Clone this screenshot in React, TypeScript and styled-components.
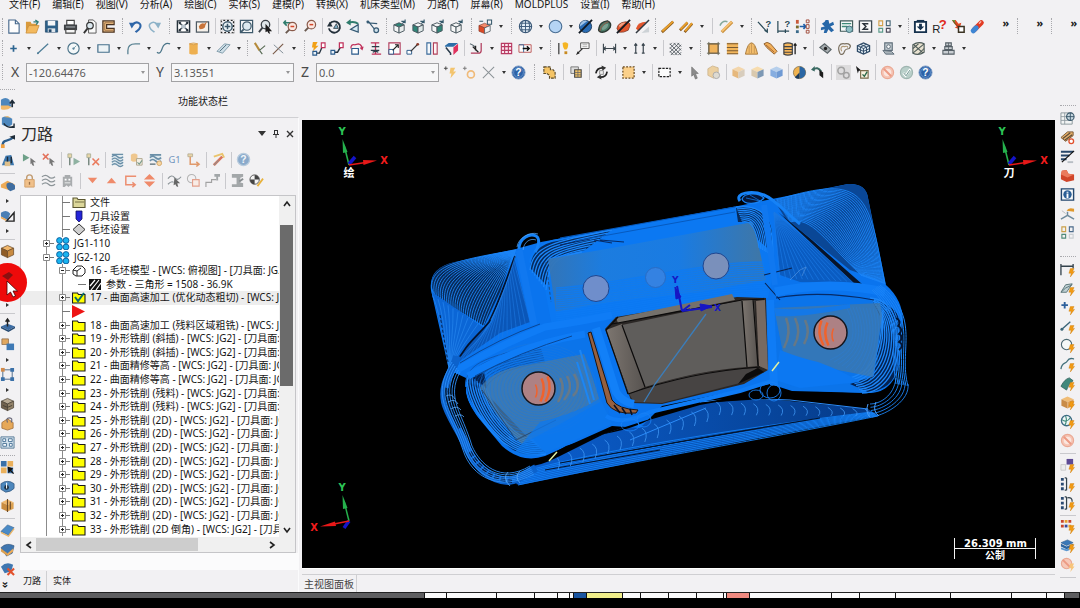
import React from 'react';
import styled, { createGlobalStyle } from 'styled-components';

const GlobalStyle = createGlobalStyle`
  *, *::before, *::after { box-sizing: border-box; }
  html, body { margin: 0; background: #000; overflow: hidden; }
  body, button, input {
    font-family: "Noto Sans", "Noto Sans CJK SC", sans-serif;
    color: #161616;
  }
  button { margin: 0; padding: 0; border: 0; background: none; }
  ul { margin: 0; padding: 0; list-style: none; }
`;

/* ---------- icon drawing helpers ---------- */

const L = (d: string, c: string, w = 1.2) => <path d={d} stroke={c} strokeWidth={w} fill="none" />;
const F = (d: string, c: string, s = 'none', w = 0.8) => <path d={d} fill={c} stroke={s} strokeWidth={w} />;
const O = (x: number, y: number, r: number, f: string, s = 'none', w = 1.2) => (
  <circle cx={x} cy={y} r={r} fill={f} stroke={s} strokeWidth={w} />
);
const cube = (t: string, l: string, r: string, s = 'none') => (
  <>
    {F('M8 1.5L14.5 4.5L8 7.5L1.5 4.5Z', t, s)}
    {F('M1.5 4.5L8 7.5V14.5L1.5 11.5Z', l, s)}
    {F('M14.5 4.5L8 7.5V14.5L14.5 11.5Z', r, s)}
  </>
);
const bolt = F('M11 7h4l-1.500 3h2l-4.500 6l1-4h-2.500z', '#f29a12', '#c97a08', 0.4);
const wire = (t: string, l: string, r: string) => (
  <>
    {F('M7.500 4L13 6.300L7.500 8.600L2 6.300Z', t, '#49565e', 1)}
    {F('M2 6.300L7.500 8.600V15L2 12.500Z', l, '#49565e', 1)}
    {F('M13 6.300L7.500 8.600V15L13 12.500Z', r, '#49565e', 1)}
    {L('M10 2.500h4M14 0.500v4M11 5l3-3', '#35586a', 1.2)}
  </>
);
const square4 = (a: string, b: string, c: string, d: string) => (
  <>
    {F('M2 2h4v5H2z', 'none', a, 1.2)}
    {F('M10 2h4v5h-4z', 'none', b, 1.2)}
    {F('M2 10h4v4H2z', 'none', c, 1.2)}
    {F('M10 10h4v4h-4z', 'none', d, 1.2)}
  </>
);
const lens = (x: number, y: number, c: string, f: string) => (
  <>
    {L(`M${x - 3} ${y + 3}L${x - 7} ${y + 7}`, '#6a5a50', 2)}
    {O(x, y, 4.5, f, c, 1.3)}
  </>
);
const q = (x: number, y: number, c: string, size = 11) => (
  <text x={x} y={y} fontSize={size} fontWeight={700} fill={c} textAnchor="middle" fontFamily="Liberation Sans, sans-serif">?</text>
);
const help = (
  <>
    {O(8, 8, 7, '#2c62a8', '#7f9dc4', 1)}
    {O(8, 8, 5.2, 'none', '#8fb0dd', 0.6)}
    {q(8, 12, '#fff')}
  </>
);

const ORG = '#efb35c';

const icons: Record<string, React.ReactNode> = {
  new: <>{F('M3 1h7l4 4v10H3z', '#fdfdfd', '#46688c', 1.2)}{L('M10 1v4h4', '#46688c')}</>,
  open: <>{F('M1 3h5l1 2h6v3H4l-3 6z', '#d99a3c')}{F('M4 7h11l-3 8H1z', '#f3b95e', '#c88b35')}{L('M9 3h4M11 1l3 2l-2 3', '#2f7c7a', 1.4)}</>,
  save: <>{F('M1.500 2h13v12h-13z', '#2c6089', '#23486a')}{F('M4 2h8v5H4z', '#f4f6f8')}{F('M4 10h8v4H4z', '#dfe6ec')}{F('M5 11h3v3H5z', '#23486a')}</>,
  print: <>{F('M4 1.500h8v5H4z', '#fff', '#444', 1.2)}{F('M1 6h14v6H1z', '#3f4246')}{F('M3 11h10v4H3z', '#f5f5f5', '#444', 1.2)}{L('M3 8.500h10', '#b9bec2', 1)}</>,
  preview: <>{F('M7 1h5l3 3v11H7z', '#fafafa', '#555', 1)}{L('M6 10L2 15', '#333', 2)}{O(8.500, 7, 3.500, '#dbe7ee', '#333', 1.3)}</>,
  cpart: <>{F('M2 2h12v4H6v4h8v4H2z', '#f0c48b', '#4a3220', 1.3)}{L('M4 4h9M4 4v8h9', '#8a5a30', 0.8)}</>,
  undo: <>{L('M5 6C9 1 15 5 13 9C12 12 9 13 8 14', '#2f66a8', 2.2)}{F('M1 4l7 0l-4 6z', '#2f66a8')}</>,
  redo: <>{L('M11 6C7 1 1 5 3 9C4 12 7 13 8 14', '#8db2c8', 1.6)}{F('M15 4l-7 0l4 6z', '#8db2c8')}</>,
  fit: <>{F('M1.500 2h13v12h-13z', '#fff', '#26323c', 1.5)}{L('M3 3.500l10 9M13 3.500l-10 9', '#26323c', 1.5)}{F('M5.500 6h5v4h-5z', '#b7c3cc')}{F('M3 3h3l-3 3zM13 3v3l-3-3zM3 13v-3l3 3zM13 13h-3l3-3z', '#26323c')}</>,
  regen: <>{F('M1.500 3h13v11h-13z', '#f6f1ea', '#4e5a64', 1.3)}{F('M4 8q3-5 6-3l3-3l-2 5q0 4-6 4z', '#c8743a')}</>,
  zoomdot: <>{F('M1.500 1.500h13v13h-13z', 'none', '#222', 1.5)}<path d="M1.500 1.500h13v13h-13z" stroke="#f1f0f2" strokeWidth={2} strokeDasharray="2 2" fill="none" />{O(8, 8, 5, '#e9f1f4', '#3a5568', 1.5)}{L('M8 5v6M5 8h6', '#3a5568', 1.6)}</>,
  zoomwin: <>{F('M1.500 1.500h13v13h-13z', '#f5f7f8', '#3f5a6c', 1.3)}{O(8.500, 7.500, 4.500, '#dce9f0', '#3f5a6c', 1.3)}{L('M5 11l-3 3', '#3f5a6c', 2)}</>,
  zoomsel: <>{O(8, 6, 4.500, '#dfe6ea', '#3b4248', 1.4)}{L('M5 9l-4 5', '#3b4248', 2)}{F('M8 5l7 8h-3l1 3l-2-1l-1-2l-2 1z', '#1b1b1b')}</>,
  unzoom: <>{L('M1 4h7M3 1.500L1 4l3 3', '#2f7c6d', 1.8)}{lens(10, 8, '#8a5a4a', '#fbe9e2')}{L('M8 8h4', '#d3472a', 1.6)}</>,
  unzoom2: <>{lens(10, 6, '#8a5a4a', '#fbe9e2')}{L('M8 6h4', '#d3472a', 1.6)}</>,
  rotate: <>{L('M3 5a6 6 0 1 1-1 5', '#24303a', 2)}{F('M0 8h6l-3-5z', '#24303a')}{F('M7 10l3-5l2 5z', '#7fb0c8', '#24303a')}</>,
  prevview: <>{L('M2 4q7-2 11 1', '#2f7c6d', 2)}{F('M0 4l5-4v7z', '#2f7c6d')}{F('M5 11l8-5v8z', '#d8ecf5', '#365a74', 1.3)}</>,
  view2: <>{L('M2 4l11 1M4 3l7 9', '#365a74', 1.3)}{O(12, 12, 2.500, '#cfe2ec', '#365a74', 1.3)}{O(3, 3, 1.500, '#365a74')}</>,
  cubeA: wire('#2f8577', '#f4f6f6', '#e8ecec'),
  cubeB: wire('#f4f6f6', '#2f8577', '#dfe8e8'),
  cubeC: wire('#f4f6f6', '#f4f6f6', '#2f8577'),
  cubeD: wire('#f7f8f8', '#f7f8f8', '#eef0f0'),
  cubeR: <>{F('M7 4.500L13 7L7 9.500L1 7Z', '#f58a6a', '#8a4a3a', 0.700)}{F('M1 7L7 9.500V15.500L1 13Z', '#dc4a26', '#8a3a2a', 0.700)}{F('M13 7L7 9.500V15.500L13 13Z', '#f3f3f3', '#49565e')}{L('M1.500 2.500h4M10 1h4.500v4.500H10z', '#35586a', 1.1)}</>,
  globe: <>{O(8, 8, 6.500, '#e4eef6', '#3a5877', 1.3)}{L('M8 1.500v13M1.500 8h13M4.500 3q-2 5 0 10M11.500 3q2 5 0 10M3 4.500h10M3 11.500h10', '#3a5877', 1)}</>,
  sphere: <>{O(8, 8, 6.700, '#b5d4f4', '#4b6f94', 1.2)}</>,
  halfblue: <>{O(8, 8, 6.500, '#2a6db5', '#1c3b5c', 1)}{F('M2 8a6 6 0 0 1 8-6z', '#9fc3e6')}{L('M1 15L15 1', '#101820', 2)}</>,
  greenell: <>{F('M2 10Q3 3 11 2Q16 4 14 9Q10 15 4 14Q1 13 2 10Z', '#4a7a68', '#2e3a34', 1.6)}{F('M5 10Q7 5 12 5Q12 10 6 12Z', '#7aa090')}{L('M3 13Q4 6 12 3', '#a05a48', 1)}</>,
  redhalf: <>{F('M1 10Q2 4 10 3Q15 3 15 7L13 12Q8 15 3 14Z', '#e2562e', '#6a2a1a', 0.700)}{L('M1 15L15 1', '#101820', 2)}{F('M3 7q3-4 7-3l-6 5z', '#f2a083')}</>,
  redhalf2: <>{F('M1 10Q3 3 12 3L4 13Z', '#e2562e')}{F('M7 15l8-7v6z', '#cdd2d6')}{L('M1 15L15 1', '#303840', 1.6)}</>,
  pencil: <>{L('M2 14L14 3', '#8a5a1c', 3)}{L('M2.500 13L14 2.500', '#e9a02c', 2)}</>,
  pencils: <>{L('M1 12L9 4M6 14L14 5', '#8a5a1c', 2.800)}{L('M1.500 11L9 3.500M6.500 13L14 4.500', '#e9a02c', 2)}</>,
  brush: <>{L('M1 7q3-6 8-4', '#84a89a', 1.6)}{L('M3 14L14 3', '#c88f3c', 3.400)}{L('M3 13L13.500 3', '#f5c070', 2.200)}</>,
  anapt: <>{L('M1 3l10 11M8 12l3 2v-4', '#2a4a58', 1.3)}{q(12, 8, '#2a4a58', 10)}</>,
  anadist: <>{L('M2 2v12M2 13h12M10 11v4M2 11v4', '#2a4a58', 1.3)}{q(12, 9, '#2a4a58', 10)}</>,
  replace: <>{F('M1 1h3v4H1z', '#c95a3a')}{F('M1 7h3v3H1z', '#7a6a2a')}{F('M1 12h3v3H1z', '#3a6a8a')}{L('M5 8h6M9 5.500l2.500 2.500l-2.500 2.500', '#1f5fa8', 1.8)}{F('M12 1h3v3h-3zM12 6h3v4h-3zM12 12h3v3h-3z', '#f1f1f1', '#a04a3a', 1)}</>,
  jig: <>{F('M6 1h3l1 4l4-2l1 3l-4 2l4 4l-3 2l-3-3l-2 4H4l1-4l-4 1V9l4-1L2 5l3-2z', '#2667a8')}</>,
  form: <>{F('M1.500 2h13v11h-13z', '#f5f8f8', '#3f5a58', 1.2)}{L('M3 5h10M3 8h6', '#3f8a78', 1.4)}{O(11, 11, 3.500, '#8fc0c4', '#3f6a78', 1)}</>,
  sigma: <>{F('M1.500 2h13v12h-13z', '#fafafa', '#3f4a52', 1.4)}{L('M11 5H5.500L8.500 8L5.500 11H11', '#2a323a', 1.5)}</>,
  four: square4('#d1a04a', '#4a6a7a', '#5a9a8a', '#4a4a5a'),
  boxdown: <>{F('M2 3h12v11H2z', '#fff', '#16324e', 2)}{F('M8 12L4 8h2.500V5h3v3H12z', '#16324e')}{F('M4 1h8v2H4z', '#16324e')}</>,
  rq: <><text x="4.500" y="15" fontSize="12" fill="#222" textAnchor="middle" fontFamily="Liberation Sans, sans-serif">R</text>{q(11.500, 11, '#e02a1a', 14)}</>,
  redarrow: <>{F('M1 1l4 0l3 4l3-1l-2 7l-5-2l2-1z', '#e04a22')}{F('M1 1l3 0l1 6z', '#5aa03c')}{L('M2 2l7 8', '#8a3a1a', 1)}{F('M8 8h6v6H8z', '#fdfdfd', '#3b3322', 1.6)}</>,
  pill: <g strokeLinecap="round">{L('M4.500 11.500L12 4', '#e23a22', 5.500)}{L('M3.500 12.500L6.500 9.500', '#3e86d4', 5.500)}{L('M10 4.500l1.500-1.500', '#f6b5ac', 1.4)}</g>,

  plus: L('M8 4.500v7M4.500 8h7', '#2c6490', 1.8),
  line: <>{L('M2 13L13 3', '#4c7c96', 1.3)}{O(2, 13, 1, '#4c7c96')}</>,
  circ: <>{O(8, 8, 6, '#f4f8f9', '#4a7288', 1.2)}{O(8, 8, 1.2, '#3b6c88')}{L('M8 8l3-3', '#7aa0b0', 1)}</>,
  rect: F('M2 4h12v8H2z', '#edf3f6', '#46708c', 1.3),
  fillet: L('M2 14V10Q2 3 10 3h5', '#5c8494', 1.4),
  spline: L('M1 12C5 15 6 9 7 7C9 2 12 2 15 3', '#4a7488', 1.3),
  cyl: <>{F('M3.500 3h9v10.500q-4.500 2-9 0z', '#eeb050')}{F('M3.500 3q4.500-2 9 0q-4.500 2-9 0z', '#f6cf8c', '#c88a35', 0.600)}</>,
  surf: <>{F('M1 11L9 3L15 4L7 13Z', '#cfdfe8', '#6a8a9a', 0.800)}{L('M4 11L11 4', '#4a6a7a', 1)}</>,
  trim: <>{L('M3 2l5 8', '#b58a3a', 2.200)}{L('M8 10l6-5M8 10l3 4', '#566a52', 1.2)}</>,
  brk: <>{L('M2 14L13 3', '#7a5a48', 1.2)}{L('M3 4l10 9', '#7d8a92', 1)}</>,
  modA: <>{F('M2 1h5l-2 4h3l-6 6l1-4H1z', '#f2a116')}{L('M5 13h4L12 6', '#243340', 1.4)}{F('M2 11h4v4H2z', '#e8f0f6', '#2a5a8a', 1.2)}{F('M11 2h4v5h-4z', '#fff', '#c0305a', 1.2)}</>,
  modB: <>{L('M4 12h4L12 5', '#243340', 1.6)}{F('M1 10h4v4H1z', '#e8f0f6', '#2a5a8a', 1.2)}{F('M10 2h4v5h-4z', '#fff', '#c0305a', 1.3)}</>,
  modC: <>{F('M3 8h7v6H3z', '#fff', '#2a5a8a', 1.2)}{L('M2 8q0-5 4-4l4-1q4 1 4 6M12 7l2 2l1-3', '#c0305a', 1.3)}</>,
  modD: <>{L('M2 9Q8 14 14 5M8 2v12', '#2c3e4a', 1.2)}{F('M8 2h5l-5 5z', '#fff', '#c0305a', 1)}</>,
  modE: <>{L('M3 2h9M4 14h10M8 2v12', '#c0305a', 1.4)}{L('M3 10h9M4 6h8M5 12q3-2 6 0', '#2c3e4a', 1.3)}</>,
  modF: <>{F('M2 2h12v12H2z', '#fdfdfd', '#b03a5a', 1.2)}{F('M2 9h5v5H2z', '#fff', '#2a5a8a', 1)}{L('M6 10L12 4M8.500 4H12v3.500', '#222', 1.2)}</>,
  modG: <>{F('M1 10h5v4H1z', '#fff', '#2a5a8a', 1)}{L('M5 11L12 4', '#333', 1.2)}{O(12.500, 3.500, 1.500, '#8a3a2a')}</>,
  modH: <>{F('M2 2h4v12H2z', '#f5f8fb', '#3a6a9a', 1.2)}{F('M9 2h4v12H9z', '#fdf4f6', '#b0405a', 1.2)}</>,
  modI: <>{F('M1 5l4-3h10l-5 4H1z', '#2d6ea8')}{F('M10 7l5-4v7l-5 5z', '#e0325e')}{L('M2 7l5 6v2', '#2a3a4a', 1.6)}</>,
  dyn: <>{L('M13 2v8q0 3-3 3H2', '#b03a5a', 1.3)}{L('M1 3q6 2 6 6', '#5a6a72', 1.2)}{L('M4 6l6 6M7 5v5', '#222', 1.4)}</>,
  gridpk: <>{F('M2 2h12v12H2z', '#fbe6ee')}{L('M2 2.500h12M2 6h12M2 10h12M2 13.500h12M2.500 2v12M6 2v12M10 2v12M13.500 2v12', '#b83a62', 1.200)}</>,
  stretch: <>{F('M1 4h13v8H1z', '#fdfdfd', '#b55', 1)}{L('M1 4h5v8', '#3a6a9a', 1)}{L('M5 8h7M9.500 5.500L12 8l-2.500 2.500', '#111', 1.5)}</>,
  note: <>{L('M3 2v12', '#444', 1.4)}{F('M7 2q4-2 6 1q0 5-2 6H9Q7 6 7 2z', '#f5b524')}{F('M9 11h3v3H9z', '#c88a20')}</>,
  leader: <>{F('M6 2h9v6H6z', '#f8f8f8', '#555', 1)}{L('M8 4h5M8 6h5', '#999', 0.8)}{L('M8 8L3 13', '#333', 1.2)}{F('M1 15l2-4l2 2z', '#222')}</>,
  dimh: L('M1.500 3v10M14.500 3v10M1.500 8h13M4 6l-2 2l2 2M12 6l2 2l-2 2', '#3d4850', 1.2),
  dimv: L('M4 3v10M12 3v10M2.500 5L4 3l1.500 2M10.500 5L12 3l1.500 2M2.500 13h3M10.500 13h3', '#3d4850', 1.3),
  hatch: <>{L('M2 4l2-2M2 8l6-6M2 12l10-10M3 15L14 4M7 15l7-7M11 15l3-3M2 11l4 4M2 7l8 8M2 3l12 12M6 2l8 8M10 2l4 4', '#4a5258', 0.900)}</>,
  frame: <>{F('M3 3h10v10H3z', ORG, '#8a6030', 1.2)}{L('M3 1v14M13 1v14M1 3h14M1 13h14', '#6a6a5a', 1)}</>,
  bars: <>{F('M2 2h12v12H2z', '#f2b65c')}{L('M2 3h12M2 7h12M2 10.500h12M2 13.500h12', '#7a5a30', 1.1)}</>,
  arch: <>{F('M1.500 14Q4 2 8 2Q12 2 14.500 14Z', '#f3bd6c', '#a87838', 1)}{L('M5.500 13V5M8 13V2M11 13V5', '#c09050', 0.800)}</>,
  rib: <>{F('M1 3Q4 0 8 3L15 11L12 14L4 7Z', '#f2b05a', '#8f6030', 1)}{L('M3 4l9 8', '#a06030', 1)}</>,
  stack: <>{F('M2 3q4-2 9 0v11q-5 2-9 0z', '#f5b55a', '#444', 1.3)}{L('M2 6h9M2 9h9M2 12h9', '#444', 1.1)}{L('M14 14V3M12.500 5L14 3l1.500 2', '#222', 1.4)}</>,
  nest: <>{F('M2 7l5-4l7 6l-4 4z', '#a7adb0', '#5a6468', 1.2)}{O(8, 8, 1.800, '#222')}</>,
  contour: <>{L('M3 13C0 6 3 2 8 3C13 2 16 5 13 8C10 9 9 8 8 11C7 15 4 15 3 13Z', '#7a7060', 1.3)}{L('M5 11C3 7 5 5 8 6C11 5 12 6 11 7', '#b09a78', 1.2)}</>,
  mesh: <>{F('M1.500 5L8 2l6.500 3v6L8 14L1.500 11z', '#dfeaf2', '#2e4a66', 1.3)}{L('M1.500 5L8 8l6.500-3M8 8v6M4.700 3.500l6.500 3v6M11.200 3.500l-6.500 3v6M1.500 8L8 11l6.500-3', '#2e4a66', 1)}</>,
  vise: <>{F('M4 2h8v8H4z', '#c3ccd2', '#5d6c78', 1.2)}{F('M2 10l9 1l3 3H5z', '#aab4ba', '#5d6c78', 1)}{O(8, 6, 2, '#f4f6f8', '#5d6c78', 1)}</>,
  meshB: <>{F('M2 4q6-4 12-1v9q-6 4-12 1z', '#e9e2d0', '#4c5a58', 1.2)}{L('M2 13L14 3M2 8l6-5M8 14l6-6M3 4l10 9', '#4c5a58', 1.1)}</>,
  mill: <>{F('M5 2h6v3H5zM4 6h8v3H4zM2 10h12v4H2z', '#c9ced2', '#555f66', 1.1)}{L('M8 2v12', '#555f66', 0.800)}</>,

  ptfast: <>{L('M1 3.500h4M3 1.500v4', '#444', 1)}{F('M8 3h5l-2 4h3l-6 7l1-5H7z', '#f3c46e')}</>,
  ptcirc: <>{L('M1 3.500h4M3 1.500v4', '#777', 1)}{O(9.500, 10, 3.700, 'none', '#f0bb7a', 1.800)}</>,
  cross: <>{L('M2 2l12 12M14 2L2 14', '#8b9296', 1.100)}</>,
  help,
  selA: <path d="M2 2h7v3h3l2 3v6H8v-3L5 9H2z" fill="#f5c465" stroke="#5a4a2a" strokeWidth={1.200} strokeDasharray="3 1" />,
  selB: <>{F('M2 2h8v7H2z', '#ddd', '#777', 1)}{F('M6 5h7v8H6z', '#f5c465', '#4a4a4a', 1.2)}{L('M6 8h7M6 10.500h7M9.500 5v8', '#666', 0.800)}</>,
  cycle: <>{L('M2 9q1-6 7-6M14 7q-1 6-7 6', '#222', 1.800)}{F('M8 0.500l5 2.500l-4 3zM8 15.500l-5-2.500l4-3z', '#333')}{F('M6 6h4v4H6z', '#eee', '#777', 0.800)}</>,
  selwin: <>{F('M2 2h12v12H2z', '#fbd08a')}<path d="M2 2h12v12H2z" fill="none" stroke="#6a4a20" strokeWidth={1.300} strokeDasharray="2 1.500" /></>,
  dashrect: <path d="M2 3.500h12v9H2z" fill="#fbfbfb" stroke="#222" strokeWidth={1.300} strokeDasharray="2.500 1.200" />,
  arrow: F('M5 2l7 7h-3l2 5l-2 1l-2-5l-2 2z', '#8b8b8b', '#666', 0.600),
  boxes: <>{F('M2 4l5-3l6 2v7l-5 4l-6-3z', '#ecd0a0', '#c9b088', 0.800)}{O(11, 11, 3.500, '#dedbd2', '#aaa', 1)}</>,
  boxA: cube('#f3d6ac', '#e6b87c', '#d8cdbd'),
  boxB: cube('#f7dcae', '#d9c9ae', '#7d98b4'),
  boxC: cube('#b6cfec', '#86ade0', '#6f9ad4'),
  ball: <>{O(8, 8, 6.500, '#f0b24e', '#7a6a4a', 0.800)}{F('M8 8V1.500A6.500 6.500 0 0 1 8 14.500Z', '#2a66a4')}{F('M8 8L3 13q2 2 5 1.500z', '#1c3a5a')}</>,
  turn: <>{L('M2 5q5-4 9 2', '#3a6a62', 2)}{F('M0 5l4-4v6z', '#3a6a62')}{F('M9 5l4 3v6l-4-3z', '#1c1c1c')}</>,
  gears: <>{F('M0 0h16v16H0z', '#dddcdd')}{O(5.500, 6, 3.500, 'none', '#a2a2a2', 1.600)}{O(11, 11, 3, 'none', '#a2a2a2', 1.600)}</>,
  selchk: <>{F('M1 1l6 5l-3 0l-1 3z', '#1c1c1c')}{F('M6 6h8v8H6z', '#fbf3e0', '#7a6a4a', 1.200)}{L('M8 10l2 2l3-5', '#2f6a4a', 1.500)}</>,
  no: <>{O(8, 8, 6.500, '#f6c4b4', '#eaa893', 1.2)}{O(8, 8, 4, '#fbe6de')}{L('M4 4l8 8', '#ec9a84', 2)}</>,
  ok: <>{O(8, 8, 6.500, '#b9cfc9', '#9fb5b0', 1.2)}{L('M4.500 8.500l2.500 3l5-7', '#fff', 2.4)}{L('M5 8.500l2.500 3l4-6', '#54807a', 0.900)}</>,

  tpsel: <>{F('M1 2l7 4l-7 4z', '#6ea088')}{F('M9 6l6 5h-3l1 4l-2-1l-1-2l-1 1z', '#777')}</>,
  tpdel: <>{L('M2 2l6 6M8 2L2 8', '#e2725c', 1.600)}{F('M9 6l6 5h-3l1 4l-2-1l-1-2l-1 1z', '#777')}</>,
  tpplay: <>{F('M2 2h4v4H2z', '#e8d6a8', '#a0a890', 0.800)}{L('M4 6v8', '#7a8a82', 1.600)}{F('M8 6l7 4l-7 4z', '#8fb2a2')}</>,
  tpx: <>{F('M2 2h4v4H2z', '#e8d6a8', '#a0a890', 0.800)}{L('M4 6v8', '#7a8a82', 1.600)}{L('M8 7l7 7M15 7l-7 7', '#ea7b5e', 1.600)}</>,
  waves: <>{F('M2 2h12v12H2z', '#dfe9ee')}{L('M2 2.500h12M2 5q3-3 6 0t6 0M2 8q3-3 6 0t6 0M2 11q3-3 6 0t6 0M2 14q3-3 6 0t6 0', '#6a8fa8', 1.500)}</>,
  verify: <>{F('M2 3q4-3 7 0v6q-4 3-7 0z', '#efc78e')}{F('M8 7h6v7H8z', '#f4efe4', '#b0a890', 1)}{L('M9 11l2 2l3-4', '#7a9a8a', 1.200)}</>,
  waves2: <>{F('M2 2h12v7H2z', '#dfe9ee')}{L('M2 3h12M2 6q3-3 6 0t6 0M2 9.500q3-3 6 0t6 0', '#6a8fa8', 1.800)}{L('M2 13h6', '#7a8a92', 1.800)}{O(12, 12, 2.500, '#f6d6a4', '#d8a868', 1)}</>,
  g1: <text x="8" y="12" fontSize="10" fill="#6f93bd" textAnchor="middle">G1</text>,
  feed: <>{F('M2 2h5v3H2z', '#e8d6a8', '#b0a890', 0.800)}{L('M4.500 5v8h9M11 10.500l3 2.500l-3 2.500', '#e09a6c', 1.600)}</>,
  wand: <>{L('M3 14L12 5', '#d9745a', 2.800)}{L('M3 5l9-3l2 4', '#eac46c', 2)}{L('M3 14L8 9', '#8f8f8f', 1.200)}</>,
  helpp: <>{O(8, 8, 6.500, '#8aaacb', '#b8cbdd', 1.4)}{q(8, 12, '#f2f6fa')}</>,
  lock: <>{L('M5 7V5a3 3 0 0 1 6 0v2', '#c09a70', 1.500)}{F('M3 7h10v8H3z', '#f0c08a', '#d2a06a', 1)}{L('M8 9.500v3', '#9a7048', 1.400)}</>,
  curves: L('M1 4q4-3 7 0t7 0M1 8q4-3 7 0t7 0M1 12q4-3 7 0t7 0', '#8b9397', 1.300),
  ghost: <>{F('M3 15V4h2V2h6v2h2v11l-2-2l-2 2l-2-2l-2 2z', '#a9acae')}{F('M5 6h2v2H5zM9 6h2v2H9zM5 10h6v1H5z', '#fff')}</>,
  triD: F('M3 5h10l-5 6z', '#ef8a6a'),
  triU: F('M3 11h10l-5-6z', '#ef8a6a'),
  insert: L('M14 3.500H3v9h9M10 10l3 2.500l-3 2.500', '#ec8e70', 1.600),
  updown: <>{F('M2 7h12L8 1zM2 9h12l-6 6z', '#ef8a6a')}</>,
  wsel: <>{L('M1 6q4-5 7-1t7-1M1 12q4-4 6-2', '#8a9296', 1.200)}{F('M8 5l6 6h-3l1 4l-2-1l-1-2l-2 1z', '#666')}</>,
  shapes: <>{O(6, 6, 4.500, 'none', '#b4b4b4', 1.100)}{F('M7 7h7v7H7z', '#f8ece6', '#e3a08c', 1.200)}</>,
  steps: <>{L('M1 15V10h6V7h5', '#a2a2a2', 1.200)}{F('M10 1h6v3h-2v4h-2V4h-2z', '#a2a6a8')}</>,
  machine: <>{F('M2 1h12v3l-3 1v5l3 1v4H2v-3h5V5H2z', '#a3a7a9')}{L('M10 9l4-3', '#8a8f92', 2)}</>,
  ballpen: <>{O(6, 7, 5, '#f4f4f4', '#555', 1)}{F('M6 7V2a5 5 0 0 1 5 5zM6 7v5a5 5 0 0 1-5-5z', '#444')}{L('M9 14L15 6', '#e8b23c', 1.800)}</>,

  lA: <>{F('M1 4q5-4 9 0l2 7q-6 4-11 1z', '#4d87bd')}{F('M1 10h8l3 2q-5 4-11 2z', '#f1b868')}{L('M13 12V6M10.500 8L13 5l2.500 3', '#1d2b38', 1.800)}</>,
  lB: <>{F('M2 3q5-3 11 1v6q-5 4-11 0z', '#4d87bd')}{F('M4 2l4-1l4 2z', '#f1b868')}{L('M4 9q4 6 11 3M15 9v4h-4', '#1d2b38', 1.500)}</>,
  lC: <>{L('M3 13q-1-5 4-6t8-4', '#2c5d8c', 2.400)}{F('M1 11h4v4H1z', '#f1a040')}{F('M10 3l6-2v5z', '#1d2b38')}</>,
  lD: <>{F('M2 13L6 3l6-1l3 11z', '#3b77ae')}{F('M5 9h6v5H5z', '#dfc08c')}{L('M8 9V4M12 11V4', '#1d2b38', 1.500)}</>,
  lE: <>{F('M1 7l7-4l8 4l-6 6l-9-3z', '#edab58')}{F('M7 6q5-3 9 2v4l-5 2q-5-3-4-8z', '#3f6da0')}</>,
  lF: <>{F('M1 5q6-4 10 1l-3 7L1 9z', '#4a7fb5')}{F('M1 9l6 3v2L1 11z', '#edab58')}{L('M7 14L15 5v9z', '#222', 1.500)}</>,
  lG: cube('#f0b66a', '#8f5c26', '#c88a40', '#6a4a28'),
  lH: cube('#c05030', '#9a2a1a', '#b03a22'),
  lI: <>{F('M1 9l7-3l8 3l-7 4z', '#3d6da4')}{L('M8 9V2M6 4l2-3l2 3', '#222', 1.500)}{F('M1 9l8 4v2l-8-4zM16 9l-7 4v2l7-4z', '#284c74')}</>,
  lJ: <>{F('M2 2h7v6H2z', '#e0a860', '#8a6a4a', 0.800)}{F('M7 7h8v7H7z', '#3f7ab5')}</>,
  lK: <>{L('M3 3h10M3 13h10M3 3v10M13 3v10', '#4c6a8a', 1)}{F('M1 1h4v4H1z', '#d08a4a')}{F('M11 1h4v4h-4zM1 11h4v4H1zM11 11h4v4h-4z', '#3a70a8')}</>,
  lL: <>{cube('#b8aa94', '#71624e', '#93836a', '#4a4236')}{L('M3 9l5 2l5-2', '#4a4236', 1)}</>,
  lM: <>{F('M2 7l6-4l6 4v6l-6 2l-6-2z', '#e6a858', '#9a6a38', 0.800)}{L('M8 7q-2-5 2-5t2 5', '#667', 1.200)}</>,
  lN: <>{F('M1 2h14v12H1z', '#d5e4ee', '#5a7c96', 1)}{F('M3 9h4v3H3zM9 4h4v3H9zM3 4h3v3H3zM10 9h3v3h-3z', '#f6fafc', '#4a7296', 1)}</>,
  lO: <>{F('M1 1h6v6H1zM8 8h6v6H8z', '#3a70a8')}{F('M8 1h6v6H8zM1 8h6v6H1z', '#eab05c')}{F('M8 7l6 2l-2 2l3 3l-1 1l-3-3l-2 2z', '#111')}</>,
  lP: <>{F('M1 5q7-5 14 0v5q-4 4-9 4l-5-3z', '#4d87bd', '#355a80', 0.800)}{O(7, 9, 2.500, '#1c2c3c')}{L('M7 4v6', '#f0f4f8', 1.200)}</>,
  lQ: <>{cube('#efb76c', '#c98c40', '#dba050')}{L('M8 1v14M11 4v8', '#6a4a28', 1.200)}</>,
  lR: <>{F('M1 9l7-7l7 3l-6 8z', '#4a8ac6', '#2c5a88', 0.600)}{L('M1 10l8 4l6-8', '#e8b468', 1.500)}</>,
  lS: <>{F('M1 6q6-6 14-2l-2 8l-6 3z', '#3f76b0', '#284a70', 0.600)}{F('M7 13l7-6v3l-6 5z', '#edab58')}{F('M1 7l7 5v3l-7-5z', '#dca050')}</>,
  lT: <>{F('M1 6q6-6 13-2l-2 7l-7 2z', '#3f76b0')}{L('M8 8l7 7M15 8l-7 7', '#e2502c', 2.200)}</>,

  rA: <>{F('M1 2h12v12H1z', '#f2f4f4', '#8b979c', 1)}{L('M1 6h12M1 10h12M5 2v12', '#8b979c', 0.900)}{O(11, 6, 4, '#c7d8e0', '#3c5a6c', 1.200)}{L('M11 2v8M7 6h8', '#3c5a6c', 1)}</>,
  rB: <>{F('M1 8L8 2h6v4L6 12z', '#e6b06a', '#7a5630', 1)}{L('M3 9l8-6M5 11l8-6', '#5a4a3a', 1.200)}{O(12, 12, 2.500, '#fff', '#e0502c', 1.400)}</>,
  rC: <>{L('M1 3h13M1 7h9M1 11h6', '#26466a', 2.200)}{L('M2 14L15 2', '#111', 1.300)}{L('M8 14h6', '#b8bec4', 2)}</>,
  rD: <>{F('M1 7l1-4l5-1l2 4l6 1v6l-8 2l-6-3z', '#d0452a')}{F('M1 7l7 3l7-3l-6-1l-2-4l-5 1z', '#ea7a5c')}</>,
  rE: <>{F('M1.500 2h13v12h-13z', '#f8fafb', '#22466e', 1.500)}{O(8, 8, 4.500, '#2b5f96')}{F('M7 7h2v5H7zM7 5h2v1H7z', '#fff')}</>,
  rF: <>{L('M1 14l7-4l7 4M8 10V6', '#6f8a9c', 1.600)}{L('M2 5l4 3', '#bbb', 1)}{F('M7 5q2-4 8-2v3z', '#e0982c')}</>,
  rG: square4('#c9a04a', '#4a6a8a', '#4f8a7a', '#c9ced2'),
  rH: <>{L('M1 2v12M1 4.500h13M14 2v5', '#33424c', 1.400)}{bolt}</>,
  rI: <>{F('M1 12L6 4l7-1l-6 9z', '#c0d0d4', '#5a7478', 1)}{L('M1 12q4-5 12-8', '#5a7478', 1)}{bolt}</>,
  rJ: <>{L('M5 2v7M1.500 5.500h7', '#2c5f9c', 2)}{bolt}</>,
  rK: <>{L('M2 11L11 3', '#3a6478', 1.500)}{O(2, 11, 1.600, '#3a6478')}{bolt}</>,
  rL: <>{O(7, 7, 5.500, '#f5f9f9', '#4d6a74', 1.200)}{bolt}</>,
  rM: <>{L('M1 13C2 5 6 8 8 4S13 2 15 2', '#43707c', 1.400)}{bolt}</>,
  rN: <>{F('M1 11q4-8 9-9l4 3q-5 3-7 10z', '#3f887c', '#2a5a54', 0.800)}{bolt}</>,
  rO: <>{cube('#f1bd76', '#c98c48', '#e0a25a')}{bolt}</>,
  rP: <>{O(7, 7, 5.500, '#edf5f5', '#3d6a84', 1.400)}{L('M2 6q5 4 9-2M6 2q2 6-1 10', '#3d8a7a', 1.200)}{bolt}</>,
  rQ: <>{F('M7 1h7v6H7z', '#5d4a94')}{F('M1 7h5v6H1z', '#ececec', '#c2c2c2', 0.800)}{bolt}</>,
  rR: <>{F('M1 1h3v3H1zM1 6h3v3H1zM1 11h3v3H1z', '#2a4a72')}{L('M7 1v13M5 1h2M5 14h2', '#33424c', 1.300)}{bolt}</>,
  rS: <>{F('M1 1h3v3H1zM1 6h3v3H1zM1 11h3v3H1z', '#2a4a72')}{L('M7 1v13M5 1h2M5 14h2M8 2q5-1 5 4', '#33424c', 1.300)}{bolt}</>,
  rT: <>{F('M1 1h3v3H1zM9 1h3v3H9zM1 6h3v3H1z', '#c8452c')}{F('M5 1h3v3H5zM9 6h3v3H9z', '#e8a02c')}{F('M5 6h3v3H5z', '#3a4a9a')}{bolt}</>,
  rU: <>{F('M1 5l7-3l6 3l-7 3z', '#3a78b8', '#2a5a8a', 0.600)}{F('M1 9l6 3l7-3v-3l-7 3l-6-3z', '#2d66a2')}{F('M1 12l6 2l3-1v-2l-3 1l-6-2z', '#5c98d0')}{bolt}</>,
  rV: <>{O(7, 7, 5.500, '#f6c8b8', '#eaa893', 1.2)}{L('M3 3l8 8', '#ec9a84', 2)}{F('M11 7h4l-1.500 3h2l-4.500 6l1-4h-2.500z', '#f8c47a')}</>,
};

/* ---------- shell ---------- */

const Shell = styled.div`
  display: flex;
  flex-direction: column;
  height: 100vh;
  min-height: 600px;
  overflow: hidden;
  background: #f2f1f3;
`;

const MenuBar = styled.nav`
  display: flex;
  gap: 12px;
  height: 15px;
  padding-left: 9px;
`;

const MenuItem = styled.button`
  height: 9px;
  font-size: 10px;
  line-height: 9px;
  white-space: nowrap;
`;

const Bar = styled.div<{ $h?: number }>`
  display: flex;
  align-items: center;
  flex: none;
  height: ${p => p.$h ?? 22}px;
`;

const Strip = styled.aside<{ $w: number; $end?: number }>`
  display: flex;
  flex-direction: column;
  align-items: center;
  flex: none;
  width: ${p => p.$w}px;
  padding-right: ${p => p.$end ?? 0}px;
  overflow: hidden;
`;

const IconButton = styled.button`
  display: grid;
  place-items: center;
  flex: none;
  width: 19px;
  height: 19px;
  svg { display: block; width: 15px; height: 15px; overflow: visible; }
`;

const Caret = styled.button<{ $column?: boolean; $soft?: boolean }>`
  display: grid;
  place-items: center;
  flex: none;
  width: 11px;
  height: 11px;
  opacity: ${p => (p.$soft ? 0.5 : 1)};
  &::after {
    content: '';
    border: 2px solid transparent;
    ${p => (p.$column ? 'border-left: 3px solid #333; border-right: 0;' : 'border-top: 3px solid #333; border-bottom: 0;')}
  }
`;

const Divider = styled.span<{ $size: number; $dotted?: boolean; $column?: boolean }>`
  display: grid;
  place-items: center;
  flex: none;
  width: ${p => (p.$column ? 16 : p.$size)}px;
  height: ${p => (p.$column ? p.$size : 16)}px;
  &::after {
    content: '';
    width: ${p => (p.$column ? '100%' : '0')};
    height: ${p => (p.$column ? '0' : '100%')};
    ${p => (p.$column ? 'border-top' : 'border-left')}: 1px ${p => (p.$dotted ? 'dotted #a9a9ad' : 'solid #c9c9cd')};
  }
`;

const Gap = styled.span<{ $size: number }>`
  flex: none;
  width: ${p => p.$size}px;
  height: ${p => p.$size}px;
`;

const More = styled.button<{ $down?: boolean }>`
  flex: none;
  align-self: ${p => (p.$down ? 'center' : 'flex-start')};
  width: 14px;
  height: 14px;
  font-size: 11px;
  line-height: 9px;
  font-weight: 700;
  text-align: center;
  transform: ${p => (p.$down ? 'rotate(90deg)' : 'none')};
`;

/* Item codes: "|n" line, ":n" dotted handle, "_n" gap, "v" drop-down caret, ">>" overflow, otherwise an icon. */
function Items({ list, column }: { list: string; column?: boolean }) {
  return (
    <>
      {list.split(' ').map((code, i) => {
        const n = Number(code.slice(1));
        if (code[0] === '|' || code[0] === ':')
          return <Divider key={i} $size={n} $dotted={code[0] === ':'} $column={column} />;
        if (code[0] === '_') return <Gap key={i} $size={n} />;
        if (code === 'v') return <Caret key={i} $column={column} aria-label="more options" />;
        if (code === '>>') return <More key={i} $down={column} aria-label="more tools">»</More>;
        return (
          <IconButton key={i} aria-label={code}>
            <svg viewBox="0 0 16 16">{icons[code]}</svg>
          </IconButton>
        );
      })}
    </>
  );
}

const AxisLabel = styled.label`
  flex: none;
  width: 22px;
  font-size: 14px;
  line-height: 20px;
  text-align: center;
  color: #4a4a4a;
`;

const Combo = styled.div`
  display: flex;
  align-items: center;
  flex: none;
  width: 123px;
  height: 19px;
  background: #f7f7f8;
  border: 1px solid #a2a2a4;
`;

const ComboInput = styled.input`
  flex: 1;
  min-width: 0;
  padding: 0 2px;
  border: 0;
  background: transparent;
  font-size: 11px;
  line-height: 17px;
  color: #5c5c5c;
`;

const Main = styled.div`
  display: flex;
  flex: 1;
  min-height: 0;
  position: relative;
`;

const Centre = styled.div`
  display: flex;
  flex-direction: column;
  flex: 1;
  min-width: 0;
`;

const FunctionBar = styled.div`
  flex: none;
  height: 32px;
  padding-left: 158px;
  font-size: 10px;
  line-height: 32px;
`;

const Work = styled.div`
  display: flex;
  flex: 1;
  min-height: 0;
  gap: 3px;
`;

/* ---------- tool path panel ---------- */

const Panel = styled.section`
  display: flex;
  flex-direction: column;
  flex: none;
  width: 279px;
  border-top: 1px solid #d0d0d3;
  border-right: 1px solid #fbfbfc;
`;

const PanelHead = styled.header`
  display: flex;
  align-items: center;
  height: 31px;
  padding: 0 1px;
`;

const PanelTitle = styled.h1`
  flex: 1;
  margin: 0;
  font-size: 16px;
  line-height: 30px;
  font-weight: 400;
  color: #2b2b2b;
`;

const HeadButton = styled.button`
  display: grid;
  place-items: center;
  width: 14px;
  height: 14px;
`;

const TreeBox = styled.div`
  display: grid;
  grid-template-columns: 1fr 16px;
  grid-template-rows: 1fr 15px;
  flex: 1;
  min-height: 0;
  margin: 4px 2px 0 0;
  background: #fff;
  border: 1px solid #c5c5c8;
`;

const Tree = styled.ul`
  display: grid;
  grid-auto-rows: 1fr;
  min-width: 0;
  padding-bottom: 1px;
  overflow: hidden;
  font-size: 10px;
  line-height: 13px;
`;

const Row = styled.li<{ $depth: number; $active?: boolean }>`
  display: flex;
  align-items: center;
  gap: 2px;
  min-height: 0;
  padding-left: ${p => 21 + p.$depth * 16}px;
  white-space: nowrap;
  background:
    linear-gradient(#8b8b8b, #8b8b8b) 25px 0 / 1px 100% no-repeat,
    ${p => (p.$depth > 0 ? 'linear-gradient(#8b8b8b, #8b8b8b) 41px 0 / 1px 100% no-repeat,' : '')}
    ${p => (p.$active ? '#ededed' : '#fff')};
`;

const Twist = styled.span`
  flex: none;
  width: 12px;
  height: 9px;
  svg { display: block; }
`;

const RowIcon = styled.span`
  flex: none;
  width: 14px;
  height: 13px;
  svg { display: block; }
`;

const RowText = styled.span`
  padding-left: 2px;
`;

const ScrollV = styled.div`
  display: flex;
  flex-direction: column;
  align-items: center;
  background: #f0f0f0;
`;

const ScrollH = styled.div`
  display: flex;
  align-items: center;
  grid-column: 1 / -1;
  padding-right: 16px;
  background: #f0f0f0;
`;

const ScrollArrow = styled.button`
  display: grid;
  place-items: center;
  flex: none;
  width: 15px;
  height: 15px;
`;

const TrackV = styled.div`
  flex: 1;
  align-self: stretch;
  display: flex;
  flex-direction: column;
  padding: 0 2px 0 1px;
  &::before { content: ''; flex: 14; }
  &::after { content: ''; flex: 136; }
`;

const ThumbV = styled.div`
  flex: 160;
  background: #6b6b6b;
`;

const TrackH = styled.div`
  flex: 1;
  height: 13px;
`;

const ThumbH = styled.div`
  width: 71%;
  height: 100%;
  background: #cdcdcd;
`;

const PanelFoot = styled.div`
  flex: none;
  height: 17px;
  background: #fbfbfc;
`;

const Tabs = styled.div`
  display: flex;
  align-items: center;
  flex: none;
  height: 22px;
`;

const Tab = styled.button`
  height: 20px;
  padding: 0 5px 0 3px;
  font-size: 9px;
  line-height: 20px;
  border-right: 1px solid #cfcfd2;
  &:last-child { padding-left: 6px; border-right: 0; }
`;

type Kind = 'dir' | 'tool' | 'stock' | 'group' | 'model' | 'param' | 'done' | 'ptr' | 'op';

const rows: [number, string, Kind, string][] = [
  [1, '', 'dir', '文件'],
  [1, '', 'tool', '刀具设置'],
  [1, '', 'stock', '毛坯设置'],
  [0, '+', 'group', 'JG1-110'],
  [0, '-', 'group', 'JG2-120'],
  [1, '-', 'model', '16 - 毛坯模型 - [WCS: 俯视图] - [刀具面: JG2]'],
  [2, '', 'param', '参数 - 三角形 =  1508 - 36.9K'],
  [1, '+', 'done', '17 - 曲面高速加工 (优化动态粗切) - [WCS: JG2]'],
  [1, '', 'ptr', ''],
  [1, '+', 'op', '18 - 曲面高速加工 (残料区域粗铣) - [WCS: JG2]'],
  [1, '+', 'op', '19 - 外形铣削 (斜插) - [WCS: JG2] - [刀具面: JG2]'],
  [1, '+', 'op', '20 - 外形铣削 (斜插) - [WCS: JG2] - [刀具面: JG2]'],
  [1, '+', 'op', '21 - 曲面精修等高 - [WCS: JG2] - [刀具面: JG2]'],
  [1, '+', 'op', '22 - 曲面精修等高 - [WCS: JG2] - [刀具面: JG2]'],
  [1, '+', 'op', '23 - 外形铣削 (残料) - [WCS: JG2] - [刀具面: JG2]'],
  [1, '+', 'op', '24 - 外形铣削 (残料) - [WCS: JG2] - [刀具面: JG2]'],
  ...Array.from({ length: 8 }, (_, i): [number, string, Kind, string] => [
    1, '+', 'op', `${25 + i} - 外形铣削 (2D) - [WCS: JG2] - [刀具面: JG2]`,
  ]),
  [1, '+', 'op', '33 - 外形铣削 (2D 倒角) - [WCS: JG2] - [刀具面: JG2]'],
];

const folder = F('M0.500 2h5l1 1.500h6.500v8.500H0.500z', '#ffff00', '#1a1a1a', 1.1);
const rowIcons: Record<Kind, React.ReactNode> = {
  dir: <>{F('M1 2h4l1 1.500h7v8H1z', '#dcd79a', '#5a5630', 1.1)}{L('M3 6h9', '#5a5630', 0.800)}</>,
  tool: F('M4 1h6v8l-3 3l-3-3z', '#2424d8', '#101060', 0.800),
  stock: F('M7 1l6 5.500l-6 5.500l-6-5.500z', '#cfcfcf', '#333', 1),
  group: <>{[3.5, 10].map(x => [3.5, 10].map(y => <circle key={`${x}${y}`} cx={x} cy={y} r={2.900} fill="#18b4f0" stroke="#0a5a9a" strokeWidth={0.900} />))}</>,
  model: <>{F('M1 6l4-4h5l3 3v4l-3 3H4l-3-2z', '#fff', '#222', 1)}{L('M1 6l4 1l4-3M5 7v5', '#222', 1)}</>,
  param: <>{F('M1 1h12v11H1z', '#111')}{L('M2 8l5-6M3 12l8-10M8 12l5-7', '#fff', 1.2)}</>,
  done: <>{folder}{L('M3 6l3 4l6-8', '#0a6a6a', 2)}</>,
  ptr: F('M0 0l13 6.500l-13 6.500z', '#ee1414'),
  op: folder,
};

function ToolpathTree() {
  return (
    <Tree role="tree">
      {rows.map(([depth, twist, kind, text], i) => (
        <Row key={i} role="treeitem" $depth={depth} $active={kind === 'done'}>
          <Twist>
            <svg width="12" height="9" viewBox="0 0 12 9">
              <path d={twist ? 'M8 4.500h4' : 'M4 4.500h8'} stroke="#777" />
              {twist && <path d="M1.500 1.500h6v6h-6z" fill="#fff" stroke="#8a8a8a" />}
              {twist && <path d={twist === '+' ? 'M3 4.500h3M4.500 3v3' : 'M3 4.500h3'} stroke="#222" />}
            </svg>
          </Twist>
          <RowIcon><svg width="14" height="13" viewBox="0 0 14 13">{rowIcons[kind]}</svg></RowIcon>
          <RowText>{text}</RowText>
        </Row>
      ))}
    </Tree>
  );
}

const Chevron = ({ d }: { d: string }) => (
  <svg width="8" height="8" viewBox="0 0 8 8"><path d={d} fill="none" stroke="#222" strokeWidth="1.600" /></svg>
);

/* ---------- graphics view ---------- */

const ViewColumn = styled.section`
  display: flex;
  flex-direction: column;
  flex: 1;
  min-width: 0;
  padding-top: 3px;
`;

const Canvas = styled.div`
  flex: 1;
  min-height: 0;
  background: #000;
  svg { display: block; width: 100%; height: 100%; }
`;

const ViewTabs = styled.div`
  display: flex;
  flex: none;
  height: 24px;
  padding-top: 5px;
  border-top: 1px solid #fff;
  background: #f2f1f3;
`;

const ViewTab = styled.button`
  height: 18px;
  padding: 0 2px;
  font-size: 10px;
  line-height: 16px;
  color: #444;
  border-top: 1px solid #cfcfd2;
  border-right: 1px solid #cfcfd2;
`;

const ViewTabsRest = styled.span`
  flex: 1;
  border-top: 1px solid #cfcfd2;
`;

type Curve = number[];

/* A family of cubic curves blended between two boundary curves. */
function Passes({ a, b, n, c = '#1c86f8', w = 0.9, o = 1 }: { a: Curve; b: Curve; n: number; c?: string; w?: number; o?: number }) {
  let d = '';
  for (let i = 0; i <= n; i++) {
    const p = a.map((v, k) => (v + ((b[k] - v) * i) / n).toFixed(1));
    d += `M${p[0]} ${p[1]}C${p.slice(2).join(' ')}`;
  }
  return <path d={d} fill="none" stroke={c} strokeWidth={w} opacity={o} />;
}

function Triad({ x, y, flip, name }: { x: number; y: number; flip?: boolean; name?: string }) {
  return (
    <g transform={`translate(${x} ${y})`} fontWeight={700} fontSize={10} textAnchor="middle">
      <path d="M0 0L-5-20" stroke="#25b04c" strokeWidth={1.500} />
      <path d="M-6.500-26L-1.500-13L-6-12Z" fill="#25b04c" />
      <path d={flip ? 'M0 0L-5 7' : 'M0-1L6-8'} stroke="#1414c8" strokeWidth={3.500} />
      <path d={flip ? 'M0 0L-20 4' : 'M0 0L20-3'} stroke="#e81818" strokeWidth={1.500} />
      <path d={flip ? 'M-29 5.500L-14 0.500L-13 5Z' : 'M28-4.500L14-5L14.500 0Z'} fill="#e81818" />
      <text x={-7} y={-30} fill="#2cc455">Y</text>
      <text x={flip ? -35 : 35} y={flip ? 10 : -1} fill="#f01c1c">X</text>
      {name && <text x={0} y={12} fontSize={11} fill="#fff">{name}</text>}
    </g>
  );
}

function Part() {
  const bolts: [number, number, number, string, string][] = [
    [596, 288.5, 13, '#6f8ecb', '#1e4690'], [716, 266, 13, '#7a90bb', '#1e4690'], [655.5, 277.5, 10, '#3482e2', '#2a6cc4'],
  ];
  return (
    <g>
      <defs>
        <linearGradient id="plate" x1="0" x2="1"><stop offset="0" stopColor="#3a74ac" /><stop offset="0.250" stopColor="#1f7ddc" /><stop offset="0.600" stopColor="#1c7ce0" /><stop offset="1" stopColor="#4a7696" /></linearGradient>
        <linearGradient id="skirt" x1="0" x2="1"><stop offset="0" stopColor="#0a5fd0" /><stop offset="1" stopColor="#063a86" /></linearGradient>
        <linearGradient id="wall" x1="0" x2="1"><stop offset="0" stopColor="#7d7670" /><stop offset="1" stopColor="#575350" /></linearGradient>
      </defs>

      {/* bottom skirt */}
      <path d="M516 484L530 468L566 447L622 428L700 405Q735 398 780 400L868 409L878 415L790 432L660 457L520 485Z" fill="url(#skirt)" />
      <Passes a={[530, 470, 600, 450, 760, 425, 872, 412]} b={[518, 485, 600, 467, 760, 440, 878, 416]} n={8} c="#1380f5" />
      <path d="M560 463L700 438L820 418M545 470L660 450" stroke="#03142e" strokeWidth={1.200} />
      {Array.from({ length: 26 }, (_, i) => (
        <path key={i} d={`M${555 + i * 12.4} ${i < 13 ? 456 - i * 4 : 402 + (i - 13) * 0.6}q7 4 3 ${i < 13 ? 14 : 13 - (i - 13) * 0.5}`} fill="none" stroke="#3f97f4" strokeWidth={0.800} />
      ))}
      <path d="M700 402Q740 397 790 400L868 409M630 440L706 408" fill="none" stroke="#2b8cfa" strokeWidth={1} />

      {/* body */}
      <path d="M449 370L431 290Q428 268 455 262L516 249L541 242L738 206L772 199L848 184Q866 183 868 198L886 285Q903 300 903 322L900 360Q895 392 870 393L792 391L770 384L662 406L640 428L612 426L545 456Q522 464 502 446L476 415Q462 395 466 378Z" fill="#0a74ee" />

      {/* left wing */}
      <path d="M432 288Q429 268 455 262L514 251L500 292L484 326L436 297Z" fill="#082a58" />
      <Passes a={[434, 300, 424, 268, 445, 262, 516, 250]} b={[483, 327, 486, 316, 504, 276, 514, 256]} n={25} />
      <path d="M432 292L484 328L458 360L450 368Z" fill="#0b66d6" />
      <Passes a={[433, 296, 442, 320, 444, 345, 449, 368]} b={[478, 324, 468, 338, 458, 352, 452, 366]} n={9} c="#2a8cf2" w={0.600} />
      <path d="M440 315L448 362" stroke="#06204a" strokeWidth={1} strokeDasharray="3 2" />
      <path d="M514 257L530 322L500 333L457 363L470 343L492 322Z" fill="#0a56b8" />
      <Passes a={[514, 262, 520, 285, 526, 305, 530, 322]} b={[490, 324, 480, 340, 465, 352, 457, 362]} n={16} c="#1c78e2" w={0.600} />
      <path d="M515 256C508 275 498 305 489 322C480 334 464 345 455 366" fill="none" stroke="#04122c" strokeWidth={1.800} />
      <path d="M516 254C510 275 500 303 491 320" fill="none" stroke="#2a86ee" strokeWidth={0.700} />

      {/* rear plate */}
      <path d="M529 262Q531 246 552 240L740 206Q768 205 772 228L773 275L768 298L610 318L552 326L545 290Z" fill="#0b78f2" />
      <path d="M530 268Q532 247 552 242L610 231L585 250L550 258L546 285Z" fill="#062a5c" />
      <Passes a={[530, 270, 533, 246, 552, 242, 612, 230]} b={[546, 290, 549, 262, 556, 257, 582, 252]} n={7} w={1.300} />
      <path d="M548 259L612 248L753 222L757 238L766 280L700 292L610 302L556 312Z" fill="url(#plate)" opacity={0.850} />
      <Passes a={[556, 288, 620, 285, 700, 262, 764, 262]} b={[556, 322, 620, 315, 700, 298, 768, 296]} n={16} c="#0c7af4" w={1.500} o={0.800} />
      <path d="M546 262L551 302" stroke="#26456a" strokeWidth={0.800} strokeDasharray="3 2" />
      <path d="M600 240l24 2M560 245l30-6M612 243l-18-3" stroke="#062a66" strokeWidth={1.200} />
      <path d="M736 208Q768 204 772 232L772 252L758 240L752 222L738 222Z" fill="#062a5c" />
      <Passes a={[736, 207, 768, 203, 773, 225, 773, 256]} b={[742, 222, 752, 219, 757, 232, 759, 248]} n={8} w={1.100} />
      <path d="M560 238L735 207M575 241L735 212" stroke="#065abf" strokeWidth={1} />

      {/* right wing */}
      <path d="M774 200L848 184Q866 183 868 198L884 282L850 270L785 218Z" fill="#0a4796" />
      <Passes a={[776, 200, 868, 172, 868, 195, 885, 284]} b={[790, 222, 812, 216, 824, 240, 862, 276]} n={26} />
      <path d="M774 212L858 283L800 282L780 275Z" fill="#0a5cc2" />
      <Passes a={[774, 214, 776, 235, 778, 260, 780, 278]} b={[774, 212, 805, 235, 835, 262, 858, 282]} n={14} c="#1a78e4" w={0.700} />
      <path d="M778 212L812 240L862 284L854 283L808 240Z" fill="#07142a" />
      <path d="M790 280L800 270L806 267L802 276" fill="none" stroke="#5a98e0" strokeWidth={0.600} />
      <path d="M764 275L792 268M765 283L780 300" stroke="#08224e" strokeWidth={1.100} />

      {/* connector loops */}
      <g fill="none" stroke="#1682f6">
        <path d="M519 249C519 238 530 233 536 236C541 239 538 248 535 252" strokeWidth={3} />
        <path d="M517 247C518 238 530 231 538 234M523 250C524 241 531 238 536 240" stroke="#5fb0ff" strokeWidth={0.700} />
        <path d="M740 201C734 193 752 190 764 195C776 200 785 212 800 224" strokeWidth={3} />
        <path d="M742 199C744 193 758 192 764 198C758 205 744 205 742 199Z" fill="#06183a" strokeWidth={1.200} />
        <path d="M746 198l14 3M750 195l12 7" strokeWidth={0.700} />
      </g>
      <path d="M519 250L534 325" stroke="#1078f0" strokeWidth={7} />
      <path d="M764 205L775 285" stroke="#1078f0" strokeWidth={6} />

      {/* left lobe */}
      <path d="M470 385Q462 370 500 358L590 330L600 350L610 420L545 452Q522 458 505 442L478 412Z" fill="#0b74ea" />
      <path d="M468 380Q464 395 480 414L504 443Q522 460 545 452L528 438L488 395L484 372Z" fill="#052250" />
      <Passes a={[468, 374, 462, 398, 498, 462, 546, 454]} b={[486, 388, 494, 412, 516, 440, 532, 438]} n={8} w={1.400} />
      <Passes a={[466, 382, 468, 362, 490, 356, 540, 345]} b={[484, 392, 490, 375, 510, 368, 545, 362]} n={8} w={0.700} c="#0a4a9c" />
      <path d="M480 388Q490 372 520 366L584 354Q594 380 600 402L560 424L522 444Q510 432 492 408Z" fill="#4c7ba2" opacity={0.750} />
      {Array.from({ length: 12 }, (_, i) => (
        <ellipse key={i} cx={538} cy={389} rx={20 + i * 3.500} ry={18 + i * 2.500} fill="none" stroke="#1c78dc" strokeWidth={0.700} opacity={0.800} />
      ))}
      <path d="M482 390L516 440L556 420" fill="none" stroke="#233e60" strokeWidth={0.800} />
      <path d="M560 378Q566 388 558 402M567 376Q574 388 564 400M574 374Q582 387 573 396" fill="none" stroke="#8a7a64" strokeWidth={2.500} opacity={0.600} />
      <path d="M600 398Q580 412 540 422L515 452Q530 460 548 452L612 424Z" fill="#0d78ee" opacity={0.750} />

      {/* right lobe */}
      <path d="M772 306Q780 296 815 294L876 298Q900 302 902 330L898 366Q893 392 868 393L792 390L772 384Z" fill="#0b74ea" />
      <path d="M872 300Q900 304 902 330L898 366Q893 390 868 392L850 384L874 376L882 320Z" fill="#052250" />
      <Passes a={[870, 298, 912, 300, 908, 392, 862, 393]} b={[880, 312, 884, 330, 880, 370, 850, 378]} n={8} w={1.300} />
      <path d="M774 308L880 303L882 316L873 377L838 370L784 358Z" fill="#4278a8" opacity={0.750} />
      {Array.from({ length: 11 }, (_, i) => (
        <path key={i} d={`M${846 + i * 3.4} ${306 + i * 0.3}Q${866 + i * 2} 345 ${830 + i * 4} ${360 + i * 2}`} fill="none" stroke="#2c7cd0" strokeWidth={0.700} opacity={0.800} />
      ))}
      <path d="M786 318Q792 332 784 348M795 318Q802 332 794 346M805 320Q811 332 804 344" fill="none" stroke="#8a7a62" strokeWidth={2.500} opacity={0.600} />
      <path d="M774 308Q800 312 850 304L850 308Q800 318 776 316Z" fill="#0c78f2" opacity={0.800} />
      <path d="M780 350Q800 358 818 362Q845 372 860 382L800 388L775 380Z" fill="#0c78f2" />
      <path d="M776 298Q820 290 874 300" fill="none" stroke="#062a66" strokeWidth={1.200} />

      {/* spine highlights */}
      <path d="M455 371Q500 345 545 327Q600 318 612 315M468 376Q520 345 585 334" fill="none" stroke="#0f7cf6" strokeWidth={7} />
      <path d="M460 363Q500 338 540 324M475 376Q520 352 572 336" fill="none" stroke="#0a4796" strokeWidth={1} />
      <path d="M775 292Q830 280 885 292" fill="none" stroke="#0f7cf6" strokeWidth={9} />
      <path d="M580 350L594 400M577 362L590 404" stroke="#1c86f4" strokeWidth={2} />
      <path d="M770 300L774 385" stroke="#0f7cf6" strokeWidth={8} />

      {/* pocket */}
      <path d="M605 329L616 317L737 297L766 298L768 370L744 384L662 404L632 403Z" fill="#2b2725" />
      <path d="M616 318L732 294L735 300L690 309L618 323Z" fill="#75716b" />
      <path d="M606 330L622 324L645 387L629 394Z" fill="url(#wall)" />
      <path d="M622 325L742 300L747 367Q700 370 645 387Z" fill="#5f5d5b" />
      <path d="M742 300L754 299L758 366L747 367Z" fill="url(#wall)" />
      <path d="M756 301L765 300L768 370L759 366Z" fill="#776a62" />
      <path d="M629 394Q690 370 757 368L740 383L662 403L634 402Z" fill="#474443" />
      <g fill="none" stroke="#0c0b0b" strokeWidth={1.200}>
        <path d="M606 330L628 394M622 325L645 387M742 301L747 367M753 299L758 366" />
        <path d="M628 394Q690 372 760 367M618 323L690 309M612 324L742 300L764 299M606 330L618 317" />
      </g>
      <path d="M738 384L746 374L758 368L764 372Z" fill="#0c0b0b" />
      <path d="M644 402L655 384L706 314" fill="none" stroke="#3b7dba" strokeWidth={1.300} />
      <path d="M588 333L591 332L612 400Q618 409 638 410L636 413Q614 415 607 403Z" fill="#96603f" stroke="#20140f" strokeWidth={1} />
      <path d="M614 405l6 8M622 408l4 6M630 409l2 6" stroke="#0a1020" strokeWidth={1.600} />
      <path d="M596 328L616 392Q622 402 634 404" fill="none" stroke="#1280f8" strokeWidth={8} />
      <path d="M606 416Q622 426 650 412L740 391L775 380" fill="none" stroke="#0f7cf6" strokeWidth={4} />

      {/* gap below the lobes */}
      <path d="M512 464Q530 472 560 456L604 434Q640 428 662 412L745 394Q760 392 770 394L860 398L876 405L780 398L700 403L622 428L566 446L528 468Z" fill="#000" />
      <path d="M462 386C458 400 474 420 483 432C494 450 508 468 532 464" fill="none" stroke="#000" strokeWidth={9} />
      <g fill="none" stroke="#1a80f4" strokeWidth={0.900}>
        <ellipse cx={756} cy={395} rx={7} ry={5} /><ellipse cx={770} cy={390} rx={10} ry={8} /><ellipse cx={774} cy={393} rx={7} ry={8} />
        <ellipse cx={630} cy={425} rx={9} ry={6} /><ellipse cx={644} cy={420} rx={7} ry={7} />
      </g>

      {/* linking ribbons */}
      <path d="M457 356C454 372 441 380 445 402C448 416 460 430 467 448C475 466 490 480 508 481C520 480 524 474 536 468" fill="none" stroke="#0c62cc" strokeWidth={8} />
      <path d="M447 388C444 400 452 412 460 428" fill="none" stroke="#03152f" strokeWidth={4} />
      <path d="M470 452C480 470 495 480 512 481" fill="none" stroke="#052250" strokeWidth={4} strokeDasharray="5 2" />
      <Passes a={[452, 362, 430, 398, 450, 410, 463, 450]} b={[460, 372, 446, 398, 462, 412, 472, 446]} n={5} c="#2c90fa" />
      <Passes a={[463, 450, 472, 478, 500, 492, 534, 474]} b={[472, 446, 480, 464, 500, 484, 530, 466]} n={5} c="#2c90fa" />
      <path d="M446 396q6-3 9 3M448 402q7-4 10 2M451 409q6-4 10 1M455 416q6-3 9 1M510 486q-8-8-2-14M520 483q-6-6 0-12" fill="none" stroke="#5aa8f8" strokeWidth={0.800} />
      <Passes a={[880, 285, 922, 318, 898, 350, 908, 386]} b={[872, 290, 902, 318, 890, 350, 896, 384]} n={6} c="#1c84f6" w={1} />
      <Passes a={[908, 384, 910, 400, 888, 414, 872, 417]} b={[896, 378, 894, 396, 880, 404, 870, 404]} n={4} c="#1c84f6" w={0.900} />
      <path d="M896 318q6 3 2 8q6 3 1 8q6 3 0 8q6 3 0 8" fill="none" stroke="#041634" strokeWidth={1.800} />
      <path d="M868 404q-3 8 2 13M876 402q-4 9 3 14" fill="none" stroke="#4a9cf6" strokeWidth={1} />

      {/* holes */}
      {bolts.map(([x, y, r, f, s]) => <circle key={x} cx={x} cy={y} r={r} fill={f} stroke={s} strokeWidth={1} />)}
      {[[538.5, 388.5], [830.5, 332.5]].map(([x, y], i) => (
        <g key={x}>
          <circle cx={x} cy={y} r={16.500} fill="#ad8184" stroke="#15151c" strokeWidth={1.500} />
          <g transform={`translate(${x} ${y}) ${i ? 'scale(-1 1)' : ''}`} fill="none" stroke="#f0622c" strokeWidth={2.500}>
            <path d="M9-12Q14 0 7 13" /><path d="M3-10Q8 0 2 13" /><path d="M-3-4Q0 3-3 9" strokeWidth={1.500} />
          </g>
        </g>
      ))}
      <path d="M549 461L557 452M772 371L779 362" stroke="#dff0a4" strokeWidth={1.500} />

      {/* work coordinate axes */}
      <g stroke="#1616c4" fill="#1616c4">
        <path d="M682 311L677 286M682 311L712 307M682 311L690 305" strokeWidth={2} fill="none" />
        <path d="M675 287L681 297L676 299ZM712 306L700 304L701 311Z" />
        <text x={672} y={283} fontSize={9} stroke="none" fontWeight={700}>Y</text>
        <text x={714} y={311} fontSize={9} stroke="none" fontWeight={700}>X</text>
      </g>
    </g>
  );
}

function GraphicsView() {
  return (
    <Canvas>
      <svg viewBox="302 120 753 448" preserveAspectRatio="xMidYMid meet" fontFamily="DejaVu Sans, Noto Sans CJK SC, sans-serif">
        <Part />
        <Triad x={349} y={165} name="绘" />
        <Triad x={1009} y={165} name="刀" />
        <Triad x={349} y={521} flip />
        <path d="M954.500 538V559M1035.500 538V559M954 548.500H1036" stroke="#f4f4f4" fill="none" />
        <text x={995.500} y={547} fontSize={10} fontWeight={700} fill="#fff" textAnchor="middle">26.309 mm</text>
        <text x={995} y={559} fontSize={10} fontWeight={700} fill="#fff" textAnchor="middle">公制</text>
      </svg>
    </Canvas>
  );
}

/* ---------- recording pointer and status line ---------- */

const PointerHalo = styled.div`
  position: absolute;
  left: -12px;
  top: 178px;
  width: 39px;
  height: 39px;
  border-radius: 50%;
  background: #ee0a0a;
  svg { position: absolute; left: 12px; top: 5px; }
`;

const StatusLine = styled.footer`
  display: flex;
  flex: none;
  height: 16px;
  border-top: 1px solid #222;
  border-bottom: 10px solid #000;
  background: #5e5e60;
`;

const StatusCell = styled.span<{ $grow: number; $fill?: string }>`
  flex: ${p => p.$grow} 1 0;
  border-right: 1px solid #111;
  background: ${p => p.$fill ?? '#fbfbfb'};
`;

const cells: [number, string?][] = [
  [422, '#5e5e60'], [20], [49], [37], [22], [11], [3], [12, '#1a55a0'], [35, '#f1ee8a'], [16], [27], [27], [26],
  [2], [22, '#f08a80'], [80], [27], [35], [54], [59], [34], [17], [14, '#5e5e60'],
];

const menus = ['文件(F)', '编辑(E)', '视图(V)', '分析(A)', '绘图(C)', '实体(S)', '建模(P)', '转换(X)', '机床类型(M)', '刀路(T)', '屏幕(R)', 'MOLDPLUS', '设置(I)', '帮助(H)'];
const coords = [['X', '-120.64476'], ['Y', '3.13551'], ['Z', '0.0']];

export default function App() {
  return (
    <Shell>
      <GlobalStyle />
      <MenuBar>{menus.map(m => <MenuItem key={m}>{m}</MenuItem>)}</MenuBar>
      <Bar>
        <Items list=":4 new open save print preview cpart :8 undo redo :10 fit regen |6 zoomdot zoomwin zoomsel |6 unzoom unzoom2 |6 rotate prevview view2 :8 cubeA cubeB cubeC cubeD :10 cubeR v :10 globe v sphere v halfblue greenell redhalf redhalf2 :6 pencil pencils v |10 brush v :8 anapt anadist replace |6 jig form sigma four v :6 boxdown rq redarrow pill _12 >> :8 _12 >> :8 _12 >>" />
      </Bar>
      <Bar>
        <Items list=":4 plus v line v circ v rect v fillet v spline v cyl v surf v :6 trim brk v :10 modA modB modC modE modF modG modH modI" />
        <Items list="|6 dyn v gridpk stretch v :8 note leader |8 dimh v dimv v |6 hatch v :8 frame bars arch rib stack v |6 nest contour mesh |6 vise v meshB v mill v" />
      </Bar>
      <Bar $h={26}>
        <Items list=":4" />
        {coords.map(([axis, value]) => (
          <React.Fragment key={axis}>
            <AxisLabel htmlFor={`axis-${axis}`}>{axis}</AxisLabel>
            <Combo>
              <ComboInput id={`axis-${axis}`} defaultValue={value} />
              <Caret $soft aria-label={`${axis} history`} />
            </Combo>
          </React.Fragment>
        ))}
        <Items list="_2 ptfast ptcirc cross v help :12 selA |8 selB |6 cycle |8 selwin v |6 dashrect v arrow boxes |6 boxA boxB boxC |4 ball turn |6 gears selchk |6 no ok help" />
      </Bar>

      <Main>
        <Strip $w={20} $end={6}>
          <Items column list=":9 lA lB lC lD |6 lE v lF v |6 lG lH lH v |6 lI lJ v lK v lL lM lN :6 lO lP lQ |6 lR lS lT >>" />
        </Strip>
        <Centre>
          <FunctionBar>功能状态栏</FunctionBar>
          <Work>
            <Panel>
              <PanelHead>
                <PanelTitle>刀路</PanelTitle>
                <HeadButton aria-label="panel menu"><svg width="8" height="5"><path d="M0 0h8L4 5z" fill="#333" /></svg></HeadButton>
                <HeadButton aria-label="pin"><svg width="8" height="9" fill="none" stroke="#333"><path d="M2.500 1v4.500M5.500 1v4.500M2 1.500h4M1 5.500h6M4 6v3" /></svg></HeadButton>
                <HeadButton aria-label="close"><svg width="8" height="8" stroke="#333" strokeWidth="1.400"><path d="M1 1l6 6M7 1l-6 6" /></svg></HeadButton>
              </PanelHead>
              <Bar $h={21}><Items list="tpsel tpdel |6 tpplay tpx |6 waves verify waves2 g1 feed |6 wand |6 helpp" /></Bar>
              <Bar $h={21}><Items list="lock curves ghost |6 triD triU insert updown |6 wsel shapes steps |6 machine ballpen" /></Bar>
              <TreeBox>
                <ToolpathTree />
                <ScrollV>
                  <ScrollArrow aria-label="scroll up"><Chevron d="M1 6l3-4l3 4" /></ScrollArrow>
                  <TrackV><ThumbV /></TrackV>
                  <ScrollArrow aria-label="scroll down"><Chevron d="M1 2l3 4l3-4" /></ScrollArrow>
                </ScrollV>
                <ScrollH>
                  <ScrollArrow aria-label="scroll left"><Chevron d="M6 1L2 4l4 3" /></ScrollArrow>
                  <TrackH><ThumbH /></TrackH>
                  <ScrollArrow aria-label="scroll right"><Chevron d="M2 1l4 3l-4 3" /></ScrollArrow>
                </ScrollH>
              </TreeBox>
              <PanelFoot />
              <Tabs>
                <Tab>刀路</Tab>
                <Tab>实体</Tab>
              </Tabs>
            </Panel>
            <ViewColumn>
              <GraphicsView />
              <ViewTabs>
                <ViewTab>主视图面板</ViewTab>
                <ViewTabsRest />
              </ViewTabs>
            </ViewColumn>
          </Work>
        </Centre>
        <Strip $w={25}>
          <Items column list="_16 :8 rA rB rC rD rE rF rG _10 :8 rH rI rJ rK rL rM rN rO rP no |6 rQ rR rS |4 rT rU rV |6" />
        </Strip>
        <PointerHalo>
          <svg width="24" height="30" viewBox="0 0 24 30">
            <path d="M2 8l7-4l4 3l-5 5z" fill="#8a1010" />
            <path d="M7 13V27L10.500 24L13 29L15.500 28L13 23H17.500Z" fill="#fff" stroke="#400" strokeWidth="0.800" />
          </svg>
        </PointerHalo>
      </Main>

      <StatusLine>
        {cells.map(([grow, fill], i) => <StatusCell key={i} $grow={grow} $fill={fill} />)}
      </StatusLine>
    </Shell>
  );
}
